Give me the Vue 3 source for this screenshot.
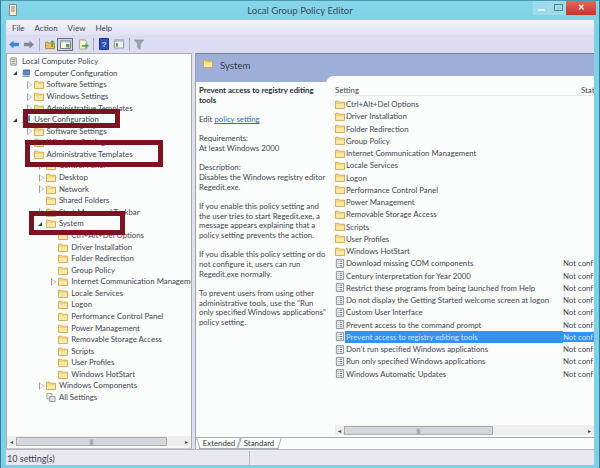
<script setup>
const menus = ['File', 'Action', 'View', 'Help']

const tree = [
  { t: 'Local Computer Policy', d: 0, i: 'root' },
  { t: 'Computer Configuration', d: 1, i: 'pc', a: 'open' },
  { t: 'Software Settings', d: 2, a: 'closed' },
  { t: 'Windows Settings', d: 2, a: 'closed' },
  { t: 'Administrative Templates', d: 2, a: 'closed' },
  { t: 'User Configuration', d: 1, i: 'pc', a: 'open' },
  { t: 'Software Settings', d: 2, a: 'closed' },
  { t: 'Windows Settings', d: 2, a: 'closed' },
  { t: 'Administrative Templates', d: 2, a: 'open' },
  { t: 'Control Panel', d: 3, a: 'closed' },
  { t: 'Desktop', d: 3, a: 'closed' },
  { t: 'Network', d: 3, a: 'closed' },
  { t: 'Shared Folders', d: 3 },
  { t: 'Start Menu and Taskbar', d: 3, a: 'closed' },
  { t: 'System', d: 3, a: 'open' },
  { t: 'Ctrl+Alt+Del Options', d: 4 },
  { t: 'Driver Installation', d: 4 },
  { t: 'Folder Redirection', d: 4 },
  { t: 'Group Policy', d: 4 },
  { t: 'Internet Communication Management', d: 4, a: 'closed' },
  { t: 'Locale Services', d: 4 },
  { t: 'Logon', d: 4 },
  { t: 'Performance Control Panel', d: 4 },
  { t: 'Power Management', d: 4 },
  { t: 'Removable Storage Access', d: 4 },
  { t: 'Scripts', d: 4 },
  { t: 'User Profiles', d: 4 },
  { t: 'Windows HotStart', d: 4 },
  { t: 'Windows Components', d: 3, a: 'closed' },
  { t: 'All Settings', d: 3, i: 'settings' }
]

const folders = ['Ctrl+Alt+Del Options', 'Driver Installation', 'Folder Redirection', 'Group Policy', 'Internet Communication Management', 'Locale Services', 'Logon', 'Performance Control Panel', 'Power Management', 'Removable Storage Access', 'Scripts', 'User Profiles', 'Windows HotStart']
const policies = ['Download missing COM components', 'Century interpretation for Year 2000', 'Restrict these programs from being launched from Help', 'Do not display the Getting Started welcome screen at logon', 'Custom User Interface', 'Prevent access to the command prompt', 'Prevent access to registry editing tools', "Don't run specified Windows applications", 'Run only specified Windows applications', 'Windows Automatic Updates']
</script>

<template>
  <div class="window">
    <svg class="defs" width="0" height="0">
      <defs>
        <symbol id="folder" viewBox="0 0 10 9">
          <path d="M.5 8.500V1.200h3.200l.8 1h5v6.300z" fill="#f6d67c" stroke="#c9a24c" stroke-width=".8" />
          <path d="M1 4h8v4H1z" fill="#fbe7a6" />
        </symbol>
        <symbol id="policy" viewBox="0 0 9 10">
          <path d="M.5.500h8v9h-8z" fill="#fff" stroke="#7d8794" />
          <path d="M2 2.500h1M4 2.500h3M2 5h1M4 5h3M2 7.500h1M4 7.500h3" stroke="#56606c" />
        </symbol>
      </defs>
    </svg>

    <header class="title-bar">
      <svg class="app-icon" width="10" height="12" viewBox="0 0 10 12">
        <path d="M1.500.5h7v11h-7z" fill="#f3efd8" stroke="#8b8b78" />
        <path d="M3 3h4M3 5h4M3 7h4" stroke="#8b8b78" />
      </svg>
      <span class="title">Local Group Policy Editor</span>
      <div class="controls">
        <span class="ctl c-min"><i class="min"></i></span>
        <span class="ctl c-max"><i class="max"></i></span>
        <span class="close">✕</span>
      </div>
    </header>

    <nav class="menu">
      <span v-for="m in menus" :key="m">{{ m }}</span>
    </nav>

    <div class="toolbar">
      <svg width="10" height="9" viewBox="0 0 11 10"><path d="M0 5l5-4.500v2.500h6v4H5v2.500z" fill="#2f8fd6" /></svg>
      <svg width="10" height="9" viewBox="0 0 11 10"><path d="M11 5L6 .5V3H0v4h6v2.500z" fill="#7d8791" /></svg>
      <i class="sep"></i>
      <svg width="10" height="11" viewBox="0 0 11 11">
        <path d="M.5 10V3h3l1 1h6v6z" fill="#e8bd5d" stroke="#a98537" />
        <path d="M7 8V3H5.500L8 .5 10.500 3H9v5z" fill="#55a844" />
      </svg>
      <span class="tool-active">
        <svg width="11" height="9" viewBox="0 0 11 9">
          <path d="M.5.5h10v8H.5z" fill="#f4f4f4" stroke="#7c8187" />
          <path d="M.5.5h10v2H.5z" fill="#b9c0ca" />
          <path d="M6 4h3.500v3.500H6z" fill="#5aa84a" />
        </svg>
      </span>
      <svg class="export" width="10" height="11" viewBox="0 0 11 11">
        <path d="M.5.5h6l2 2v8h-8z" fill="#f8f3d8" stroke="#a5a38c" />
        <path d="M3 6h4V4l4 3-4 3V8H3z" fill="#55a844" />
      </svg>
      <i class="sep sep-b"></i>
      <svg width="10" height="12" viewBox="0 0 10 12">
        <path d="M.5.5h9v11h-9z" fill="#2f52b8" stroke="#1c3380" />
        <text x="5" y="9" text-anchor="middle" font-size="8" font-family="Liberation Sans" fill="#fff">?</text>
      </svg>
      <svg width="10" height="10" viewBox="0 0 11 10">
        <path d="M.5.5h10v9H.5z" fill="#f2f2f2" stroke="#8b9097" />
        <path d="M.5.5h10v2H.5z" fill="#b5bcc6" />
        <path d="M2 4h2.500v4H2z" fill="#58a64a" />
      </svg>
      <i class="sep"></i>
      <svg class="filter" width="10" height="11" viewBox="0 0 11 11"><path d="M.5.5h10L6.800 5v5.500L4.200 9V5z" fill="#9aa7b3" stroke="#6f7c88" stroke-width=".6" /></svg>
    </div>

    <main class="panes">
      <section class="tree-pane">
        <div class="tree">
          <div v-for="(n, idx) in tree" :key="idx" class="node" :style="{ marginLeft: -8 + n.d * 12.3 + 'px' }">
            <span class="arrow" :class="n.a"></span>
            <svg v-if="n.i === 'root'" class="nicon" viewBox="0 0 10 10">
              <path d="M1.500 1h6v8h-6z" fill="#f5f1dc" stroke="#85857a" />
              <path d="M3 3h3M3 5h3M3 7h3" stroke="#85857a" />
            </svg>
            <svg v-else-if="n.i === 'pc'" class="nicon" viewBox="0 0 10 10">
              <path d="M2 1h7v5.500H2z" fill="#5b86c9" stroke="#33527f" stroke-width=".7" />
              <path d="M1 7.500h8V9H1z" fill="#8a98aa" />
            </svg>
            <svg v-else-if="n.i === 'settings'" class="nicon" viewBox="0 0 10 10">
              <path d="M.5.500h5.500v6H.5z" fill="#f4f4ec" stroke="#9a9a8c" />
              <path d="M3.500 4h6v5.500h-6z" fill="#e3e5e8" stroke="#8b9097" />
            </svg>
            <svg v-else class="nicon"><use href="#folder" /></svg>
            <span class="label">{{ n.t }}</span>
          </div>
        </div>
        <div class="scrollbar">
          <span class="sb-btn">◂</span>
          <span class="thumb left-thumb">|||</span>
          <span class="sb-btn end">▸</span>
        </div>
      </section>

      <section class="detail">
        <div class="band">
          <svg class="band-folder"><use href="#folder" /></svg>
          <span>System</span>
        </div>
        <div class="detail-body">
          <article class="desc">
            <p class="strong">Prevent access to registry editing<br />tools</p>
            <p>Edit <a>policy setting </a></p>
            <p>Requirements:<br />At least Windows 2000</p>
            <p>Description:<br />Disables the Windows registry editor<br />Regedit.exe.</p>
            <p>If you enable this policy setting and<br />the user tries to start Regedit.exe, a<br />message appears explaining that a<br />policy setting prevents the action.</p>
            <p>If you disable this policy setting or do<br />not configure it, users can run<br />Regedit.exe normally.</p>
            <p>To prevent users from using other<br />administrative tools, use the "Run<br />only specified Windows applications"<br />policy setting.</p>
          </article>
          <div class="list-wrap">
            <div class="list-head"><span>Setting</span><span class="state">Stat</span></div>
            <div class="rows">
              <div v-for="f in folders" :key="f" class="row">
                <svg class="ricon"><use href="#folder" /></svg>
                <span class="rname">{{ f }}</span>
              </div>
              <div v-for="p in policies" :key="p" class="row" :class="{ sel: p.includes('registry') }">
                <svg class="ricon"><use href="#policy" /></svg>
                <span class="rname">{{ p }}</span>
                <span class="rstate">Not conf</span>
              </div>
            </div>
            <div class="scrollbar right-bar">
              <span class="sb-btn">◂</span>
              <span class="thumb right-thumb">|||</span>
              <span class="sb-btn end">▸</span>
            </div>
          </div>
        </div>
        <div class="tabs">
          <span class="tab first">Extended</span>
          <span class="tab">Standard</span>
        </div>
      </section>
    </main>

    <footer class="status">
      <span>10 setting(s)</span>
      <i></i>
    </footer>

    <div class="mark mark-user"></div>
    <div class="mark mark-admin"></div>
    <div class="mark mark-system"></div>
  </div>
</template>

<style scoped>
.window {
  position: relative;
  width: 600px;
  height: 468px;
  box-sizing: border-box;
  padding: 0 5px 3px;
  display: flex;
  flex-direction: column;
  overflow: hidden;
  background: #7ed0e6;
  border-left: 1px solid #2f7f9a;
  border-right: 1px solid #2f7f9a;
  font-family: Lato, Roboto, sans-serif;
  font-size: 7.8px;
  color: #3e4650;
}
.defs { position: absolute; }
.title-bar {
  height: 20px;
  flex: none;
  display: flex;
  align-items: center;
  justify-content: center;
  position: relative;
  background: linear-gradient(#86d6ea, #7ed1e6);
  margin: 0 -5px;
  border-top: 1px solid #4c9ab2;
  box-sizing: border-box;
}
.app-icon { position: absolute; left: 7px; top: 3px; }
.title { font-size: 9.6px; color: #3c4a55; }
.controls {
  position: absolute;
  right: 3px;
  top: 0;
  display: flex;
  height: 14px;
}
.ctl {
  border: 1px solid #a5dbe8;
  border-top: 0;
  box-sizing: border-box;
  background: #9bdcec;
  display: flex;
  align-items: center;
  justify-content: center;
}
.c-min { width: 17px; }
.c-max { width: 16px; }
.min { width: 7px; height: 2px; background: #eef; margin-top: 4px; }
.max { width: 7px; height: 5px; border: 1px solid #5d7f8c; }
.close {
  width: 30px;
  background: linear-gradient(#df6a5c, #c5342c);
  color: #fff;
  font-size: 8px;
  font-weight: 700;
  line-height: 13px;
  text-align: center;
}
.menu {
  height: 15px;
  flex: none;
  display: flex;
  align-items: center;
  gap: 10px;
  padding-left: 6px;
  font-size: 8px;
  background: linear-gradient(#f2f3f9, #e2e3f5);
}
.toolbar {
  height: 18px;
  flex: none;
  display: flex;
  align-items: center;
  gap: 5px;
  padding-left: 3px;
  background: #dcdcf2;
}
.sep { width: 1px; height: 13px; background: #a5a9b5; }
.tool-active {
  width: 16px;
  height: 13px;
  margin-left: -3px;
  display: flex;
  align-items: center;
  justify-content: center;
  border: 1px solid #6c7078;
  box-sizing: border-box;
  background: #cfd3e6;
}
.export { margin-left: 1px; }
.sep-b { margin-left: -1px; }
.filter { margin-left: -1px; }
.panes {
  flex: 1;
  min-height: 0;
  display: flex;
  gap: 3px;
  background: #dfe0f0;
}
.tree-pane {
  width: 186px;
  flex: none;
  box-sizing: border-box;
  border: 1px solid #a9adb4;
  border-bottom-color: #c5c8cc;
  background: #fbfcfc;
  display: flex;
  flex-direction: column;
  overflow: hidden;
}
.tree { flex: 1; padding-top: 2px; overflow: hidden; }
.node {
  height: 11.58px;
  display: flex;
  align-items: center;
  white-space: nowrap;
  box-sizing: border-box;
}
.arrow { width: 10px; height: 8px; flex: none; position: relative; }
.arrow.closed::before,
.arrow.closed::after {
  content: "";
  position: absolute;
  top: 0;
  border-top: 4px solid transparent;
  border-bottom: 4px solid transparent;
}
.arrow.closed::before { left: 3px; border-left: 5px solid #9aa0a6; }
.arrow.closed::after {
  left: 4px;
  top: 1px;
  border-top-width: 3px;
  border-bottom-width: 3px;
  border-left: 3px solid #fff;
}
.arrow.open::before {
  content: "";
  position: absolute;
  left: 2px;
  top: 2px;
  border-right: 4px solid #3c3f44;
  border-top: 4px solid transparent;
}
.nicon { width: 10px; height: 9px; flex: none; margin-right: 3px; }
.label { line-height: 11px; }
.scrollbar {
  height: 10px;
  flex: none;
  display: flex;
  align-items: center;
  background: #eeeeee;
  margin-bottom: 2px;
  font-size: 6px;
  color: #444;
}
.sb-btn { width: 9px; text-align: center; flex: none; }
.thumb {
  height: 9px;
  line-height: 9px;
  box-sizing: border-box;
  text-align: center;
  background: #d6d7dc;
  border: 1px solid #a9acb2;
  font-size: 5px;
}
.left-thumb { width: 151px; }
.detail {
  flex: 1;
  min-width: 0;
  display: flex;
  flex-direction: column;
  background: #fbfcfc;
  border-left: 1px solid #9ea3ab;
  box-sizing: border-box;
}
.band {
  height: 23px;
  flex: none;
  display: flex;
  align-items: center;
  gap: 7px;
  padding-left: 7px;
  font-size: 9.6px;
  color: #36404b;
  background: #9dafd8;
  border-top: 1px solid #777c85;
  box-sizing: border-box;
}
.band-folder { width: 10px; height: 9px; margin-top: -3px; }
.detail-body {
  flex: 1;
  min-height: 0;
  display: flex;
  background: linear-gradient(#9dafd8 6px, #fbfcfc 6px);
}
.desc {
  width: 130px;
  flex: none;
  box-sizing: border-box;
  padding: 10px 0 0 3px;
  white-space: nowrap;
  line-height: 9.67px;
}
.desc p { margin: 0 0 9.67px; }
.desc .strong { font-weight: 700; color: #2b2f36; }
.desc a { color: #2a6fc0; text-decoration: underline; }
.list-wrap {
  flex: 1;
  min-width: 0;
  background: #fbfcfc;
  border-top-left-radius: 8px;
  padding-left: 9px;
  display: flex;
  flex-direction: column;
  overflow: hidden;
}
.list-head {
  height: 20px;
  flex: none;
  display: flex;
  justify-content: space-between;
  align-items: center;
  padding-top: 8px;
  box-sizing: border-box;
  border-bottom: 1px solid #e8e8e8;
}
.state { overflow: hidden; width: 13px; }
.rows { flex: 1; padding-top: 2px; }
.row {
  height: 12.25px;
  display: flex;
  align-items: center;
  white-space: nowrap;
  position: relative;
}
.ricon { width: 10px; height: 9px; flex: none; }
.rname { padding-left: 1px; flex: 1; line-height: 12px; }
.rstate { width: 31px; overflow: hidden; flex: none; }
.row.sel .rname, .row.sel .rstate { background: #3492f0; color: #dbe6f6; }
.right-thumb { width: 149px; }
.end { margin-left: auto; }
.tabs {
  height: 12px;
  flex: none;
  display: flex;
  padding-left: 3px;
  border-top: 1px solid #a9adb4;
  background: #fbfcfc;
  box-sizing: border-box;
}
.tab {
  position: relative;
  width: 40px;
  text-align: center;
  line-height: 11px;
  border-bottom: 1px solid #a9adb4;
  box-sizing: border-box;
  color: #2f353c;
}
.tab::before,
.tab::after {
  content: "";
  position: absolute;
  top: 0;
  bottom: -1px;
  width: 1px;
  background: #a9adb4;
  transform: skewX(-18deg);
}
.tab::before { left: -1px; }
.tab::after { right: -1px; }
.tab.first::before { transform: skewX(18deg); }
.status {
  height: 16px;
  flex: none;
  display: flex;
  align-items: center;
  justify-content: space-between;
  padding: 1px 0 0 1px;
  font-size: 9px;
  background: #e9e8ee;
  border-top: 1px solid #b5b7bc;
  box-sizing: border-box;
}
.status i { width: 1px; height: 14px; background: #bbb; margin-right: 344px; }
.mark { position: absolute; box-sizing: border-box; border: 5px solid #7b1420; }
.mark-user { left: 22px; top: 109px; width: 97px; height: 19px; }
.mark-admin { left: 24px; top: 140px; width: 138px; height: 27px; }
.mark-system { left: 28px; top: 211px; width: 96px; height: 24px; }
</style>
